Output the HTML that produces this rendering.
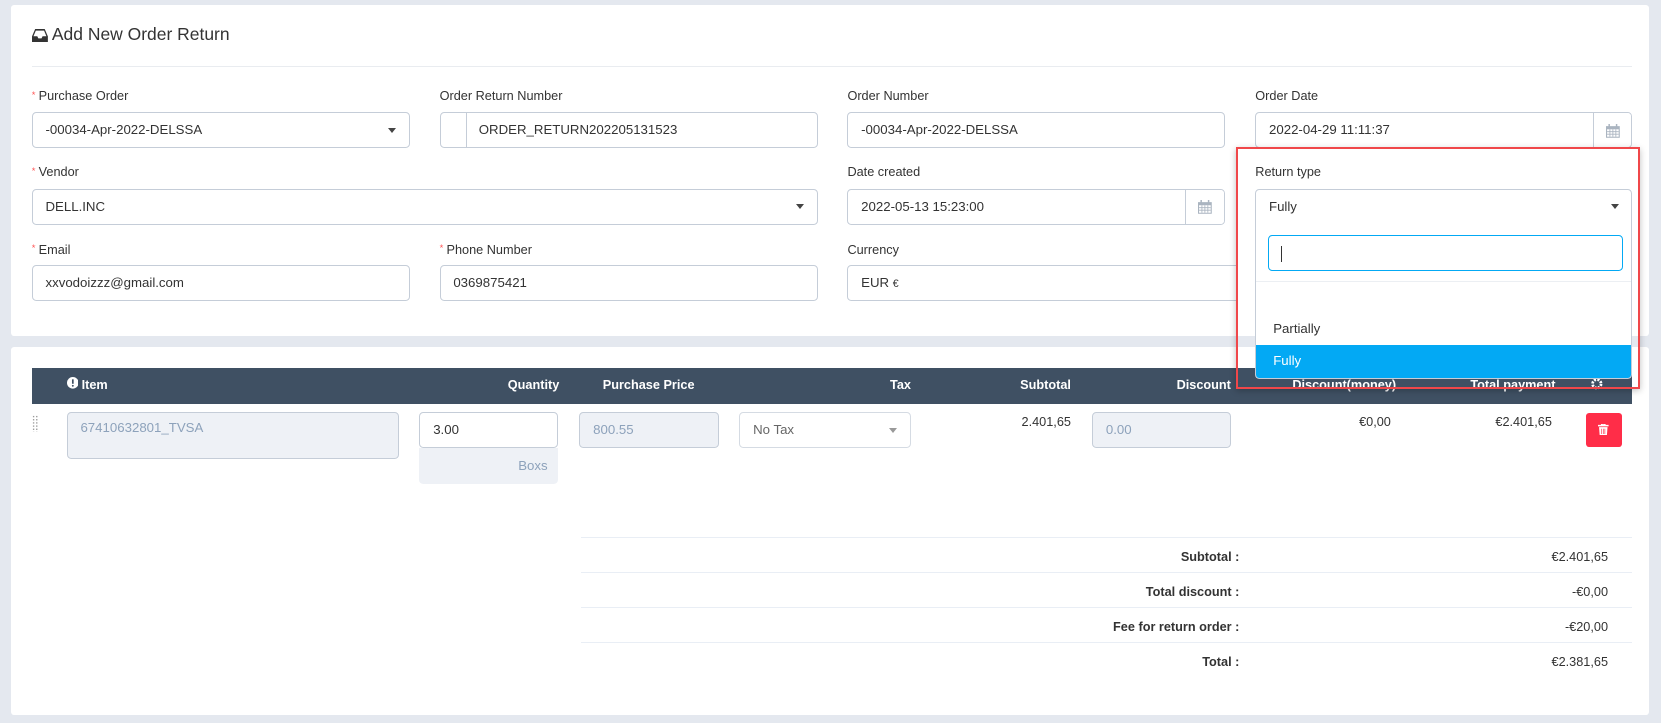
<!DOCTYPE html>
<html><head><meta charset="utf-8"><style>
*{box-sizing:border-box;margin:0;padding:0}
html,body{width:1661px;height:723px;overflow:hidden;background:#e4e8ef}
#w{zoom:1.05931;width:1568px;height:683px;position:relative;font-family:"Liberation Sans",sans-serif;font-size:12px;color:#333}
.a{position:absolute}
.card{position:absolute;background:#fff;border-radius:3px}
.lbl{position:absolute;font-size:12px;color:#333}
.lbl i{color:#f55;font-style:normal;font-size:9px;margin-right:3px;vertical-align:2px}
.inp{position:absolute;border:1px solid #c5cdd8;border-radius:4px;background:#fff;height:34px;padding:0 12px;line-height:32px;font-size:12.5px;color:#333;overflow:hidden;white-space:nowrap}
.car{position:absolute;right:12px;top:14px;border-left:4px solid transparent;border-right:4px solid transparent;border-top:5px solid #444}
.add{position:absolute;top:0;bottom:0;border-left:1px solid #c5cdd8;width:36px;right:0;background:#fff}
.th{position:absolute;top:12px;color:#fff;font-weight:bold;font-size:12px}
.sl{position:absolute;left:548px;width:993px;height:1px;background:#e9eef5}
.sk{position:absolute;right:398px;font-weight:bold;font-size:12px}
.sv{position:absolute;right:50px;font-size:12px}
</style></head><body><div id="w">
<div class="card" style="left:10px;top:5px;width:1547px;height:312px"></div>
<div class="card" style="left:10px;top:328px;width:1547px;height:347px"></div>

<svg class="a" style="left:30px;top:27px" width="15" height="13" viewBox="0 0 15 13"><path d="M3 0h9l3 7v5a1 1 0 0 1-1 1H1a1 1 0 0 1-1-1V7z" fill="#333"/><path d="M3.6 1.5h7.8l2.2 5.3H10l-1 2H6l-1-2H1.4z" fill="#fff"/></svg>
<div class="a" style="left:49px;top:23px;font-size:16.5px;color:#333">Add New Order Return</div>
<div class="a" style="left:30px;top:62px;width:1511px;height:1px;background:#e9ecf0"></div>

<div class="lbl" style="left:30px;top:83px"><i>*</i>Purchase Order</div>
<div class="inp" style="left:30px;top:106px;width:357px">-00034-Apr-2022-DELSSA<span class="car"></span></div>
<div class="lbl" style="left:415px;top:83px">Order Return Number</div>
<div class="inp" style="left:415px;top:106px;width:357px;padding-left:36px"><span class="a" style="left:24px;top:0;bottom:0;border-left:1px solid #c5cdd8"></span>ORDER_RETURN202205131523</div>
<div class="lbl" style="left:800px;top:83px">Order Number</div>
<div class="inp" style="left:800px;top:106px;width:356px">-00034-Apr-2022-DELSSA</div>
<div class="lbl" style="left:1185px;top:83px">Order Date</div>
<div class="inp" style="left:1185px;top:106px;width:356px">2022-04-29 11:11:37<span class="add"><svg class="a" style="left:11px;top:10px" width="13" height="13" viewBox="0 0 13 13"><path d="M0 2h13v11H0z" fill="#aab4c0"/><path d="M1 5h11v7H1z" fill="#fff"/><path d="M1 7.3h11M1 9.6h11M3.7 5v7M6.5 5v7M9.3 5v7" stroke="#aab4c0" stroke-width=".8"/><path d="M3 0v3M10 0v3" stroke="#aab4c0" stroke-width="1.4"/></svg></span></div>

<div class="lbl" style="left:30px;top:155px"><i>*</i>Vendor</div>
<div class="inp" style="left:30px;top:178px;width:742px">DELL.INC<span class="car"></span></div>
<div class="lbl" style="left:800px;top:155px">Date created</div>
<div class="inp" style="left:800px;top:178px;width:356px">2022-05-13 15:23:00<span class="add"><svg class="a" style="left:11px;top:10px" width="13" height="13" viewBox="0 0 13 13"><path d="M0 2h13v11H0z" fill="#aab4c0"/><path d="M1 5h11v7H1z" fill="#fff"/><path d="M1 7.3h11M1 9.6h11M3.7 5v7M6.5 5v7M9.3 5v7" stroke="#aab4c0" stroke-width=".8"/><path d="M3 0v3M10 0v3" stroke="#aab4c0" stroke-width="1.4"/></svg></span></div>

<div class="lbl" style="left:30px;top:228px"><i>*</i>Email</div>
<div class="inp" style="left:30px;top:250px;width:357px">xxvodoizzz@gmail.com</div>
<div class="lbl" style="left:415px;top:228px"><i>*</i>Phone Number</div>
<div class="inp" style="left:415px;top:250px;width:357px">0369875421</div>
<div class="lbl" style="left:800px;top:228px">Currency</div>
<div class="inp" style="left:800px;top:250px;width:400px">EUR <span style="font-size:10px">€</span></div>

<!-- table -->
<div class="a" style="left:30px;top:347px;width:1511px;height:34px;background:#3f5063"></div>
<svg class="a" style="left:63px;top:356px" width="11" height="11" viewBox="0 0 11 11"><circle cx="5.5" cy="5.5" r="5.5" fill="#fff"/><path d="M5.5 2.2v4.2" stroke="#3f5063" stroke-width="1.6"/><circle cx="5.5" cy="8.3" r=".9" fill="#3f5063"/></svg>
<div class="th" style="left:77px;top:356px">Item</div>
<div class="th" style="right:1040px;top:356px">Quantity</div>
<div class="th" style="left:569px;top:356px">Purchase Price</div>
<div class="th" style="right:708px;top:356px">Tax</div>
<div class="th" style="right:557px;top:356px">Subtotal</div>
<div class="th" style="right:406px;top:356px">Discount</div>
<div class="th" style="left:1220px;top:356px">Discount(money)</div>
<div class="th" style="left:1388px;top:356px">Total payment</div>
<svg class="a" style="left:1502px;top:357px" width="11" height="11" viewBox="0 0 11 11"><circle cx="5.5" cy="5.5" r="4" fill="none" stroke="#fff" stroke-width="2.6" stroke-dasharray="2 1.2"/><circle cx="5.5" cy="5.5" r="1.2" fill="#3f5063"/></svg>

<div class="a" style="left:30px;top:392px;width:6px;height:16px;background-image:radial-gradient(#999 .6px,transparent .7px);background-size:3px 3px"></div>
<div class="inp" style="left:63px;top:389px;width:314px;height:44px;background:#eef1f6;color:#8da2bb;line-height:28px">67410632801_TVSA</div>
<div class="inp" style="left:396px;top:389px;width:131px;height:34px">3.00</div>
<div class="a" style="left:396px;top:423px;width:131px;height:34px;background:#eef1f6;color:#8da2bb;text-align:right;padding-right:10px;line-height:34px;font-size:12.5px;border-radius:0 0 4px 4px">Boxs</div>
<div class="inp" style="left:547px;top:389px;width:132px;background:#eef1f6;color:#8da2bb">800.55</div>
<div class="inp" style="left:698px;top:389px;width:162px;color:#666;border-color:#d5dbe3">No Tax<span class="car" style="border-top-color:#999"></span></div>
<div class="a" style="right:557px;top:391px">2.401,65</div>
<div class="inp" style="left:1031px;top:389px;width:131px;background:#eef1f6;color:#8da2bb">0.00</div>
<div class="a" style="right:255px;top:391px">€0,00</div>
<div class="a" style="right:103px;top:391px">€2.401,65</div>
<div class="a" style="left:1497px;top:390px;width:34px;height:32px;background:#ff2d48;border-radius:3px"><svg class="a" style="left:12px;top:10px" width="10" height="11" viewBox="0 0 10 11"><path d="M0 1.5h10M3.5 1.5V0h3v1.5" stroke="#fff" stroke-width="1.4" fill="none"/><path d="M1 3h8l-.6 8H1.6z" fill="#fff"/><path d="M3.5 4.5v5M5 4.5v5M6.5 4.5v5" stroke="#ff2d48" stroke-width=".6"/></svg></div>

<div class="sl" style="top:507px"></div><div class="sl" style="top:540px"></div><div class="sl" style="top:573px"></div><div class="sl" style="top:606px"></div>
<div class="sk" style="top:518px">Subtotal :</div><div class="sv" style="top:518px">€2.401,65</div>
<div class="sk" style="top:551px">Total discount :</div><div class="sv" style="top:551px">-€0,00</div>
<div class="sk" style="top:584px">Fee for return order :</div><div class="sv" style="top:584px">-€20,00</div>
<div class="sk" style="top:617px">Total :</div><div class="sv" style="top:617px">€2.381,65</div>

<!-- return type + dropdown -->
<div class="a" style="left:1167px;top:139px;width:381px;height:178px;background:#fff"></div>
<div class="lbl" style="left:1185px;top:155px">Return type</div>
<div class="inp" style="left:1185px;top:178px;width:356px;border-radius:4px 4px 0 0">Fully<span class="car"></span></div>
<div class="a" style="left:1185px;top:211px;width:356px;height:147px;background:#fff;border:1px solid #c5cdd8;border-top:none;border-radius:0 0 4px 4px;overflow:hidden">
 <div class="a" style="left:11px;top:11px;width:335px;height:34px;border:1px solid #03a9f4;border-radius:4px"><span class="a" style="left:11px;top:9px;width:1px;height:15px;background:#333"></span></div>
 <div class="a" style="left:0;top:54px;width:356px;height:1px;background:#eceff3"></div>
 <div class="a" style="left:16px;top:92px;font-size:12.5px">Partially</div>
 <div class="a" style="left:0;top:115px;width:356px;height:31px;background:#03a9f4;color:#fff;padding-left:16px;line-height:31px;font-size:12.5px">Fully</div>
</div>
<div class="a" style="left:1167px;top:139px;width:381px;height:228px;border:2px solid #f0474a;box-shadow:0 2px 6px rgba(0,0,0,.25)"></div>
</div></body></html>
